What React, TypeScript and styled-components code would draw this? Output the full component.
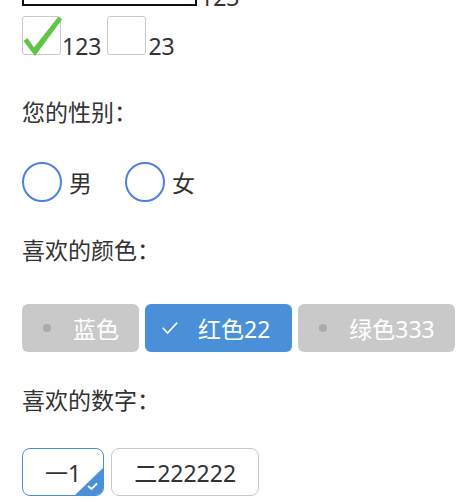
import React from "react";
import styled, { createGlobalStyle } from "styled-components";

const GlobalStyle = createGlobalStyle`
  html, body {
    margin: 0;
    padding: 0;
    background: #fff;
    overflow: hidden;
  }
  body {
    font-family: "Noto Sans", "Noto Sans CJK SC", sans-serif;
    color: #333;
  }
`;

const Page = styled.div`
  padding: 0 22px;
  margin-top: -35px;
  font-size: 23px;
`;

const Line = styled.div<{ gap?: number }>`
  display: flex;
  align-items: baseline;
  line-height: 27px;
  margin-top: ${(p) => p.gap ?? 0}px;
`;

const InputBox = styled.div`
  width: 175px;
  height: 41px;
  box-sizing: border-box;
  border: 2px solid #111;
`;

const Text = styled.span<{ left?: number }>`
  margin-left: ${(p) => p.left ?? 0}px;
`;

const CheckBox = styled.span<{ left?: number }>`
  position: relative;
  display: inline-block;
  width: 39px;
  height: 39px;
  box-sizing: border-box;
  border: 1.5px solid #c9c9c9;
  border-radius: 3px;
  margin-left: ${(p) => p.left ?? 0}px;
  svg {
    position: absolute;
    left: -1px;
    top: -1px;
  }
`;

const Label = styled.div<{ gap: number }>`
  font-size: 23px;
  line-height: 30px;
  margin-top: ${(p) => p.gap}px;
`;

const RadioRow = styled.div`
  display: flex;
  align-items: center;
  height: 40px;
  margin-top: 35px;
`;

const RadioItem = styled.label`
  display: flex;
  align-items: center;
  margin-right: 33px;
`;

const RadioCircle = styled.span`
  display: inline-block;
  width: 40px;
  height: 40px;
  box-sizing: border-box;
  border-radius: 50%;
  border: 2px solid #4d7fe3;
  margin-right: 7px;
`;

const ChipRow = styled.div`
  display: flex;
  gap: 6px;
  margin-top: 39px;
`;

const Chip = styled.div<{ active?: boolean }>`
  display: flex;
  flex-shrink: 0;
  align-items: center;
  white-space: nowrap;
  height: 48px;
  box-sizing: border-box;
  padding: ${(p) => (p.active ? "0 22px 0 17px" : "0 20px 0 21px")};
  border-radius: 6px;
  background: ${(p) => (p.active ? "#4a90d9" : "#c9c9c9")};
  color: #fff;
  font-size: 23px;
`;

const Dot = styled.span`
  flex-shrink: 0;
  width: 8px;
  height: 8px;
  border-radius: 50%;
  background: #aaa;
  margin-right: 22px;
`;

const CheckMark = styled.svg`
  flex-shrink: 0;
  margin-right: 20px;
`;

const NumRow = styled.div`
  display: flex;
  gap: 7px;
  margin-top: 33px;
`;

const NumButton = styled.div<{ active?: boolean }>`
  position: relative;
  display: flex;
  flex-shrink: 0;
  align-items: center;
  justify-content: center;
  white-space: nowrap;
  height: 48px;
  box-sizing: border-box;
  padding: 0 22px;
  border-radius: 8px;
  border: 1.5px solid ${(p) => (p.active ? "#4a90d9" : "#c9c9c9")};
  background: #fff;
  color: #333;
  font-size: 23px;
  overflow: hidden;
`;

const Corner = styled.svg`
  position: absolute;
  right: 0;
  bottom: 0;
`;

export default function App() {
  return (
    <>
      <GlobalStyle />
      <Page>
        <Line>
          <InputBox />
          <Text left={3}>123</Text>
        </Line>
        <Line gap={5}>
          <CheckBox>
            <svg width="42" height="42" viewBox="0 0 42 42">
              <path
                d="M1.5 25 L5.5 22 L12 31.5 L36.5 0.5 L40 3.5 L13 40 Z"
                fill="#5ec545"
              />
            </svg>
          </CheckBox>
          <Text left={1}>123</Text>
          <CheckBox left={6} />
          <Text left={2}>23</Text>
        </Line>

        <Label gap={37}>您的性别：</Label>
        <RadioRow>
          <RadioItem>
            <RadioCircle />
            男
          </RadioItem>
          <RadioItem>
            <RadioCircle />
            女
          </RadioItem>
        </RadioRow>

        <Label gap={33}>喜欢的颜色：</Label>
        <ChipRow>
          <Chip>
            <Dot />
            蓝色
          </Chip>
          <Chip active>
            <CheckMark width="16" height="12" viewBox="0 0 16 12">
              <path d="M0.8 5.8 L5.5 11 L15.2 0.6" fill="none" stroke="#fff" strokeWidth="1.6" />
            </CheckMark>
            红色22
          </Chip>
          <Chip>
            <Dot />
            绿色333
          </Chip>
        </ChipRow>

        <Label gap={33}>喜欢的数字：</Label>
        <NumRow>
          <NumButton active>
            一1
            <Corner width="28" height="27" viewBox="0 0 28 27">
              <path d="M28 0 L28 27 L0 27 Z" fill="#4a90d9" />
              <path d="M13 18 L16.5 21 L22 15.5" fill="none" stroke="#fff" strokeWidth="1.8" />
            </Corner>
          </NumButton>
          <NumButton>二222222</NumButton>
        </NumRow>
      </Page>
    </>
  );
}
